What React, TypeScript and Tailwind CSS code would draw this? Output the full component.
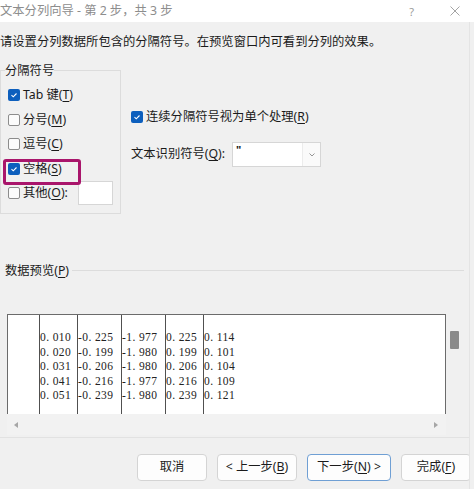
import type { ReactNode } from "react";

const previewCols: string[][] = [
  ["0. 010", "0. 020", "0. 031", "0. 041", "0. 051"],
  ["-0. 225", "-0. 199", "-0. 206", "-0. 216", "-0. 239"],
  ["-1. 977", "-1. 980", "-1. 980", "-1. 977", "-1. 980"],
  ["0. 225", "0. 199", "0. 206", "0. 216", "0. 239"],
  ["0. 114", "0. 101", "0. 104", "0. 109", "0. 121"],
];
const colWidths = ["w-[38px]", "w-[44px]", "w-[44px]", "w-[38px]", "flex-1"];

function Box({ checked }: { checked?: boolean }) {
  if (!checked) {
    return <span className="h-[12px] w-[12px] shrink-0 rounded-[2px] border border-[#8c8c8c] bg-[#fbfbfb]" />;
  }
  return (
    <span className="flex h-[12px] w-[12px] shrink-0 items-center justify-center rounded-[2px] bg-[#0d5fbd]">
      <svg viewBox="0 0 12 12" className="h-[10px] w-[10px]">
        <path d="M3 6.2 5.1 8.2 9 4.2" stroke="white" strokeWidth="1.3" fill="none" />
      </svg>
    </span>
  );
}

function K({ children }: { children: ReactNode }) {
  return <span className="underline underline-offset-[2px]">{children}</span>;
}

function Btn({ w, primary, children }: { w: string; primary?: boolean; children: ReactNode }) {
  return (
    <button
      type="button"
      className={`flex h-[27px] shrink-0 items-center justify-center rounded-[4px] border bg-[#fdfdfd] ${w} ${
        primary ? "border-[#6f9fd4]" : "border-[#d4d4d4]"
      }`}
    >
      {children}
    </button>
  );
}

export default function App() {
  return (
    <div className="h-[489px] w-[474px] overflow-hidden bg-[#f0f0f0] font-['Noto_Sans','Noto_Sans_CJK_SC',sans-serif] text-[12.3px] text-[#1b1b1b]">
      <header className="flex h-[22px] items-center bg-white">
        <span className="leading-none text-[#8d8d8d]">文本分列向导 - 第 2 步，共 3 步</span>
        <span className="ml-auto text-[11px] leading-none text-[#9a9a9a]">?</span>
        <svg viewBox="0 0 10 10" className="ml-[36px] mr-[14px] h-[10px] w-[10px]">
          <path d="M0.5 0.5 9.5 9.5M9.5 0.5 0.5 9.5" stroke="#9a9a9a" strokeWidth="0.9" />
        </svg>
      </header>

      <div className="h-[467px] w-[470px] overflow-hidden border-r border-[#e4e4e4]">
        <p className="whitespace-nowrap pt-[11px] leading-[17px]">
          请设置分列数据所包含的分隔符号。在预览窗口内可看到分列的效果。
        </p>

        <div className="mt-[12px] flex">
          <fieldset className="w-[121px] border border-[#dcdcdc] pb-[7px] pt-[4px]">
            <legend className="ml-[4px] leading-[17px]">分隔符号</legend>
            <div className="flex h-[24.5px] items-center gap-[3px] pl-[7px]">
              <Box checked />
              <span>
                Tab 键(<K>T</K>)
              </span>
            </div>
            <div className="flex h-[24.5px] items-center gap-[3px] pl-[7px]">
              <Box />
              <span>
                分号(<K>M</K>)
              </span>
            </div>
            <div className="flex h-[24.5px] items-center gap-[3px] pl-[7px]">
              <Box />
              <span>
                逗号(<K>C</K>)
              </span>
            </div>
            <div className="relative flex h-[24.5px] items-center gap-[3px] pl-[7px]">
              <Box checked />
              <span>
                空格(<K>S</K>)
              </span>
              <span className="absolute left-[2px] top-[2.5px] h-[25.5px] w-[78px] rounded-[3px] border-[3px] border-[#a9156b]" />
            </div>
            <div className="flex h-[24.5px] items-center gap-[3px] pl-[7px] pr-[7px]">
              <Box />
              <span>
                其他(<K>O</K>):
              </span>
              <span className="ml-auto h-[24px] w-[35px] border border-[#d6d6d6] bg-white" />
            </div>
          </fieldset>

          <div className="ml-[10px] pt-[46.5px]">
            <div className="flex h-[17px] items-center gap-[3px]">
              <Box checked />
              <span>
                连续分隔符号视为单个处理(<K>R</K>)
              </span>
            </div>
            <div className="mt-[16.5px] flex h-[25px] items-center">
              <span className="w-[101px]">
                文本识别符号(<K>Q</K>):
              </span>
              <div className="flex h-[25px] w-[89px] border border-[#d6d6d6] bg-white">
                <span className="flex-1 pl-[3px] pt-[1px] text-[11px] font-bold leading-[12px]">"</span>
                <span className="flex w-[18px] items-center justify-center border-l border-[#ececec] bg-[#fafafa]">
                  <svg viewBox="0 0 6 4" className="h-[4px] w-[6px]">
                    <path d="M0.5 0.5 3 3 5.5 0.5" stroke="#8a8a8a" strokeWidth="0.9" fill="none" />
                  </svg>
                </span>
              </div>
            </div>
          </div>
        </div>

        <div className="mt-[48px] flex h-[17px] items-center pl-[5px] pr-[5px]">
          <span className="leading-[17px]">
            数据预览(<K>P</K>)
          </span>
          <span className="ml-[3px] h-px flex-1 bg-[#dcdcdc]" />
        </div>

        <div className="ml-[7px] mt-[35.5px] flex">
          <div className="w-[440px]">
            <div className="flex h-[100px] border-l border-r border-t border-[#6b6b6b] bg-white font-['Liberation_Serif',serif] text-[11.5px] tracking-[0.4px] text-[#222]">
              <div className="w-[31px]" />
              {previewCols.map((col, i) => (
                <div key={i} className={`${colWidths[i]} border-l border-[#505050] pt-[15px] leading-[14.5px]`}>
                  {col.map((v, j) => (
                    <div key={j} className="whitespace-pre">
                      {v}
                    </div>
                  ))}
                </div>
              ))}
            </div>
            <div className="flex h-[21px] items-center justify-between bg-[#f2f2f2] pl-[7px] pr-[8px]">
              <svg viewBox="0 0 4 6" className="h-[6px] w-[4px]">
                <path d="M4 0 0 3 4 6Z" fill="#a6a6a6" />
              </svg>
              <svg viewBox="0 0 4 6" className="h-[6px] w-[4px]">
                <path d="M0 0 4 3 0 6Z" fill="#a6a6a6" />
              </svg>
            </div>
          </div>
          <div className="w-[23px]">
            <div className="ml-[4px] mt-[17px] h-[18px] w-[9px] rounded-[1px] bg-[#8a8a8a]" />
          </div>
        </div>

        <div className="mt-[2px] flex gap-[10px] border-t border-[#e2e2e2] pl-[137px] pt-[16px]">
          <Btn w="w-[70px]">取消</Btn>
          <Btn w="w-[80px]">
            &lt; 上一步(<K>B</K>)
          </Btn>
          <Btn w="w-[84px]" primary>
            下一步(<K>N</K>) &gt;
          </Btn>
          <Btn w="w-[70px]">
            完成(<K>F</K>)
          </Btn>
        </div>
      </div>
    </div>
  );
}
